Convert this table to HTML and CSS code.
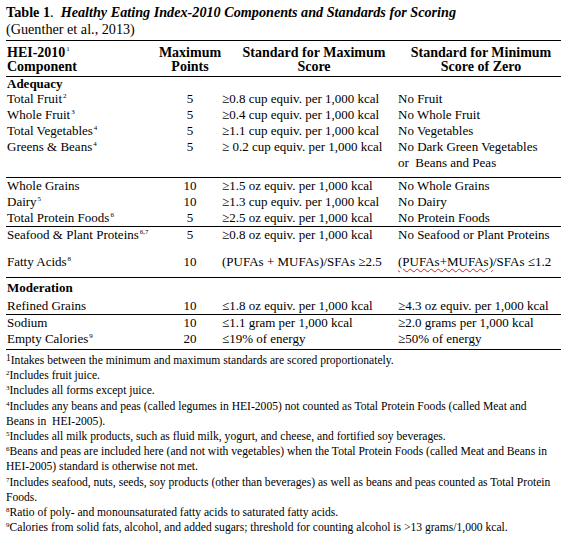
FILE: index.html
```html
<!DOCTYPE html>
<html lang="en">
<head>
<meta charset="utf-8">
<title>Table 1. Healthy Eating Index-2010</title>
<link rel="stylesheet" href="styles.css">
</head>
<body>
<div class="page">
  <div class="title">
    <div><b>Table 1</b>.&nbsp; <b><i>Healthy Eating Index-2010 Components and Standards for Scoring</i></b></div>
    <div>(Guenther et al., 2013)</div>
  </div>
  <table class="hei">
    <colgroup><col class="c1"><col class="c2"><col class="c3"><col class="c4"></colgroup>
    <thead>
      <tr>
        <th class="h-comp">HEI-2010<span class="hsup">1</span><br>Component</th>
        <th class="h-pts">Maximum<br>Points</th>
        <th class="h-max">Standard for Maximum<br>Score</th>
        <th class="h-min">Standard for Minimum<br>Score of Zero</th>
      </tr>
    </thead>
    <tbody>
      <tr class="sec"><td colspan="4">Adequacy</td></tr>
      <tr><td>Total Fruit<span class="sup">2</span></td><td class="pts">5</td><td>≥0.8 cup equiv. per 1,000 kcal</td><td>No Fruit</td></tr>
      <tr><td>Whole Fruit<span class="sup">3</span></td><td class="pts">5</td><td>≥0.4 cup equiv. per 1,000 kcal</td><td>No Whole Fruit</td></tr>
      <tr><td>Total Vegetables<span class="sup">4</span></td><td class="pts">5</td><td>≥1.1 cup equiv. per 1,000 kcal</td><td>No Vegetables</td></tr>
      <tr class="rule gb"><td>Greens &amp; Beans<span class="sup">4</span></td><td class="pts">5</td><td>≥ 0.2 cup equiv. per 1,000 kcal</td><td>No Dark Green Vegetables<br>or&nbsp; Beans and Peas</td></tr>
      <tr><td>Whole Grains</td><td class="pts">10</td><td>≥1.5 oz equiv. per 1,000 kcal</td><td>No Whole Grains</td></tr>
      <tr><td>Dairy<span class="sup">5</span></td><td class="pts">10</td><td>≥1.3 cup equiv. per 1,000 kcal</td><td>No Dairy</td></tr>
      <tr class="rule"><td>Total Protein Foods<span class="sup">6</span></td><td class="pts">5</td><td>≥2.5 oz equiv. per 1,000 kcal</td><td>No Protein Foods</td></tr>
      <tr class="seafood"><td>Seafood &amp; Plant Proteins<span class="sup">6,7</span></td><td class="pts">5</td><td>≥0.8 oz equiv. per 1,000 kcal</td><td>No Seafood or Plant Proteins</td></tr>
      <tr class="rule fatty"><td>Fatty Acids<span class="sup">8</span></td><td class="pts">10</td><td>(PUFAs + MUFAs)/SFAs ≥2.5</td><td><span class="spell">(PUFAs+MUFAs)</span>/SFAs ≤1.2</td></tr>
      <tr class="sec mod"><td colspan="4">Moderation</td></tr>
      <tr class="rule refined"><td>Refined Grains</td><td class="pts">10</td><td>≤1.8 oz equiv. per 1,000 kcal</td><td>≥4.3 oz equiv. per 1,000 kcal</td></tr>
      <tr><td>Sodium</td><td class="pts">10</td><td>≤1.1 gram per 1,000 kcal</td><td>≥2.0 grams per 1,000 kcal</td></tr>
      <tr class="rule last"><td>Empty Calories<span class="sup">9</span></td><td class="pts">20</td><td>≤19% of energy</td><td>≥50% of energy</td></tr>
    </tbody>
  </table>
  <div class="notes">
    <p><span class="nsup big">1</span>Intakes between the minimum and maximum standards are scored proportionately.</p>
    <p><span class="nsup">2</span>Includes fruit juice.</p>
    <p><span class="nsup">3</span>Includes all forms except juice.</p>
    <p><span class="nsup">4</span>Includes any beans and peas (called legumes in HEI-2005) not counted as Total Protein Foods (called Meat and<br>Beans in&nbsp; HEI-2005).</p>
    <p><span class="nsup">5</span>Includes all milk products, such as fluid milk, yogurt, and cheese, and fortified soy beverages.</p>
    <p><span class="nsup">6</span>Beans and peas are included here (and not with vegetables) when the Total Protein Foods (called Meat and Beans in<br>HEI-2005) standard is otherwise not met.</p>
    <p><span class="nsup">7</span>Includes seafood, nuts, seeds, soy products (other than beverages) as well as beans and peas counted as Total Protein<br>Foods.</p>
    <p><span class="nsup">8</span>Ratio of poly- and monounsaturated fatty acids to saturated fatty acids.</p>
    <p><span class="nsup">9</span>Calories from solid fats, alcohol, and added sugars; threshold for counting alcohol is &gt;13 grams/1,000 kcal.</p>
  </div>
</div>
</body>
</html>
```

FILE: styles.css
```css
* { box-sizing: border-box; }

html, body {
  margin: 0;
  background: #fff;
  color: #000;
  font-family: "Liberation Serif", "Times New Roman", serif;
}

.page {
  width: 566px;
  padding: 4px 0 0 6px;
}

.title {
  font-size: 14.2px;
  line-height: 17px;
  margin-bottom: 2px;
  white-space: nowrap;
}

.hei {
  border-collapse: collapse;
  table-layout: fixed;
  width: 555px;
  font-size: 13px;
  line-height: 16px;
  border-top: 1px solid #000;
}

.c1 { width: 152px; }
.c2 { width: 64px; }
.c3 { width: 176px; }
.c4 { width: 163px; }

.hei th {
  font-weight: bold;
  font-size: 14px;
  line-height: 14px;
  padding: 5px 0 2px;
  border-bottom: 1px solid #000;
  text-align: center;
  white-space: nowrap;
  vertical-align: top;
}

.hei th.h-comp { text-align: left; padding-left: 1px; }
.hei th.h-max { padding-left: 8px; }
.hei th.h-min { padding-left: 3px; }

.hei td {
  padding: 0;
  white-space: nowrap;
  vertical-align: top;
}

.hei td:first-child { padding-left: 1px; }
.hei td.pts { text-align: center; }

.hei tr.sec td { font-weight: bold; line-height: 14px; }
.hei tr.mod td { line-height: 16px; padding-top: 2px; }

.hei tr.rule td { border-bottom: 1px solid #000; }
.hei tr.gb td { padding-bottom: 6px; }
.hei tr.seafood td { padding-bottom: 11px; }
.hei tr.fatty td { padding-bottom: 7px; }
.hei tr.refined td { padding-top: 2px; }
.hei tr.last td { padding-bottom: 2px; }

.sup {
  font-size: 7px;
  line-height: 0;
  position: relative;
  top: -5px;
  margin-left: 1px;
}

.hsup {
  font-size: 7px;
  font-weight: normal;
  line-height: 0;
  position: relative;
  top: -6px;
  margin-left: 1px;
}

.spell {
  text-decoration: underline wavy #d02020;
  text-decoration-thickness: 1px;
  text-underline-offset: 2px;
}

.notes {
  margin-top: 3px;
  font-size: 11.6px;
  line-height: 15.2px;
}

.notes p {
  margin: 0;
  white-space: nowrap;
}

.nsup {
  font-size: 7px;
  line-height: 0;
  position: relative;
  top: -4px;
}

.nsup.big {
  font-size: 9.5px;
  top: -3px;
}
```
